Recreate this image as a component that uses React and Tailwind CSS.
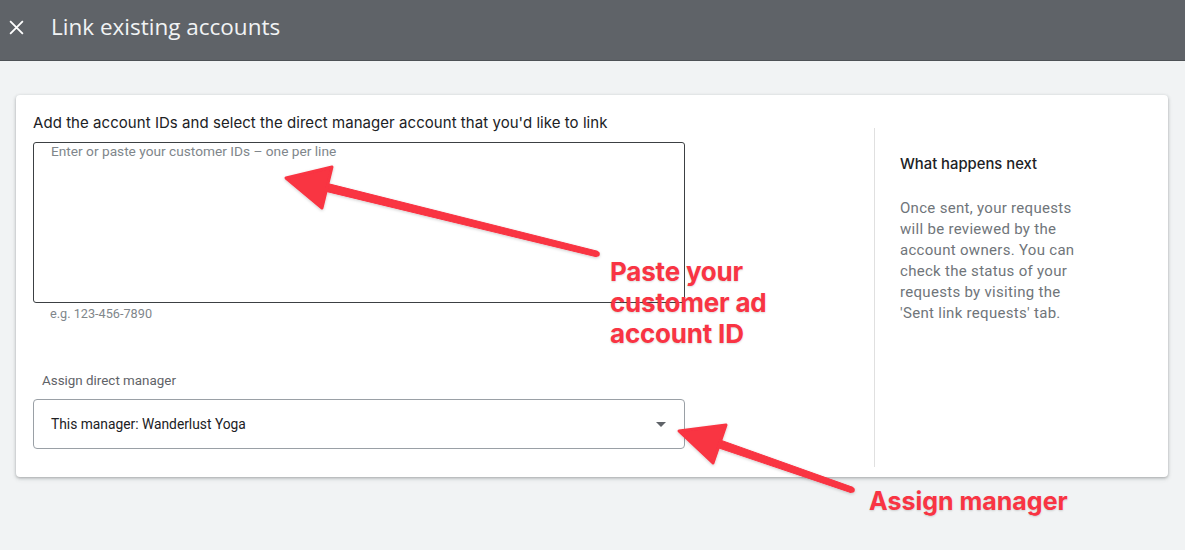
import React from "react";

function Arrow({ tail, tip, w1, w2, width = 7 }) {
  const [tx, ty] = tail;
  const bx = (w1[0] + w2[0]) / 2;
  const by = (w1[1] + w2[1]) / 2;
  const dx = bx - tx, dy = by - ty;
  const len = Math.hypot(dx, dy);
  const nx = -dy / len, ny = dx / len;
  const tw = width * 0.35;
  const hw = width / 2;
  const shaft = [
    [tx + nx * tw, ty + ny * tw],
    [bx + nx * hw, by + ny * hw],
    [bx - nx * hw, by - ny * hw],
    [tx - nx * tw, ty - ny * tw],
  ]
    .map((p) => p.join(","))
    .join(" ");
  const head = [tip, w1, w2].map((p) => p.join(",")).join(" ");
  return (
    <g fill="#f93443" stroke="#f93443" strokeLinejoin="round" filter="url(#sh)">
      <polygon points={shaft} strokeWidth="1" />
      <polygon points={head} strokeWidth="3" />
      <circle cx={tx} cy={ty} r={tw} stroke="none" />
    </g>
  );
}

export default function App() {
  return (
    <div className="relative min-h-[550px] w-full bg-[#f1f3f4] font-['Roboto',sans-serif] overflow-hidden">
      <header className="flex h-[61px] items-center bg-[#5f6368] border-b border-[#4d5155] pb-[6px]">
        <div className="flex w-[51px] items-center pl-[8px]">
          <svg width="17" height="17" viewBox="0 0 16 16">
            <path d="M2 2 L14 14 M14 2 L2 14" stroke="#ffffff" strokeWidth="1.7" />
          </svg>
        </div>
        <h1 className="text-[22.5px] text-[#f1f3f4] font-['Open_Sans',sans-serif]">Link existing accounts</h1>
      </header>

      <div className="px-[16px] pt-[34px]">
        <div className="flex h-[382px] w-[1152px] rounded-[4px] bg-white shadow-[0_1px_3px_rgba(60,64,67,0.35),0_2px_5px_rgba(60,64,67,0.12)]">
          <div className="flex w-[858px] flex-col pl-[17px] pt-[18px]">
            <p className="text-[15px] leading-[20px] tracking-[0.05px] text-[#202124] font-['Inter',sans-serif]">
              Add the account IDs and select the direct manager account that you'd like to link
            </p>
            <div className="mt-[9px] h-[161px] w-[652px] rounded-[3px] border border-[#3c4043] pl-[17px]">
              <span className="block text-[13.7px] leading-[16px] text-[#80868b]">Enter or paste your customer IDs – one per line</span>
            </div>
            <p className="mt-[3px] pl-[17px] text-[12.7px] leading-[16px] text-[#80868b]">e.g. 123-456-7890</p>
            <p className="mt-[51px] pl-[9px] text-[13.4px] leading-[16px] text-[#5f6368]">Assign direct manager</p>
            <div className="mt-[10px] flex h-[50px] w-[652px] items-center justify-between rounded-[4px] border border-[#9aa0a6] pl-[17px] pr-[18px]">
              <span className="text-[13.8px] text-[#202124]">This manager: Wanderlust Yoga</span>
              <svg width="10" height="5" viewBox="0 0 10 5">
                <path d="M0 0 L10 0 L5 5 Z" fill="#5f6368" />
              </svg>
            </div>
          </div>
          <div className="mt-[33px] mb-[10px] w-px bg-[#e0e0e0]" />
          <div className="pl-[25px] pt-[59px]">
            <h2 className="text-[14.8px] leading-[20px] font-medium text-[#202124] font-['Inter',sans-serif]">What happens next</h2>
            <p className="mt-[24px] w-[176px] text-[15px] leading-[21px] tracking-[0.3px] text-[#70757a]">
              Once sent, your requests will be reviewed by the account owners. You can check the status of your requests by visiting the 'Sent link requests' tab.
            </p>
          </div>
        </div>
      </div>

      <svg className="pointer-events-none absolute left-0 top-0" width="1185" height="550">
        <defs>
          <filter id="sh" x="-10%" y="-10%" width="120%" height="120%">
            <feDropShadow dx="0" dy="1" stdDeviation="1.5" floodColor="#000" floodOpacity="0.2" />
          </filter>
        </defs>
        <Arrow tail={[597, 254]} tip={[286, 178]} w1={[332, 167]} w2={[322, 208]} width={8} />
        <Arrow tail={[852, 490]} tip={[679, 431]} w1={[726, 425]} w2={[713, 463]} width={8} />
      </svg>
      <div className="pointer-events-none absolute left-[610px] top-[256px] text-[26px] font-bold leading-[31px] tracking-[-0.2px] text-[#f93443] font-['Inter',sans-serif] [text-shadow:0_1px_2px_rgba(0,0,0,0.15)]">
        Paste your
        <br />
        customer ad
        <br />
        account ID
      </div>
      <div className="pointer-events-none absolute left-[869px] top-[486px] text-[25px] font-bold leading-[31px] text-[#f93443] font-['Inter',sans-serif] [text-shadow:0_1px_2px_rgba(0,0,0,0.15)]">
        Assign manager
      </div>
    </div>
  );
}
